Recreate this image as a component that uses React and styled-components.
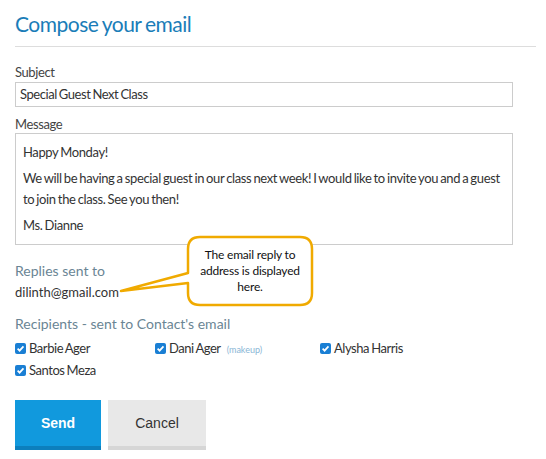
import React from 'react';
import styled, { createGlobalStyle } from 'styled-components';

const GlobalStyle = createGlobalStyle`
  body {
    margin: 0;
    background: #fff;
    font-family: Lato, "Open Sans", sans-serif;
    color: #333;
  }
`;

const Page = styled.div`
  position: relative;
  padding: 10px 10px 10px 15px;
`;

const Title = styled.h1`
  margin: 0;
  font-size: 21px;
  line-height: 28px;
  font-weight: 400;
  letter-spacing: -0.5px;
  word-spacing: -1px;
  color: #1a7db8;
`;

const Rule = styled.hr`
  margin: 8px 0 16px;
  border: 0;
  border-top: 1px solid #dddddd;
`;

const Label = styled.div`
  font-size: 13px;
  line-height: 18px;
  letter-spacing: -0.4px;
  color: #444;
  margin-top: ${(p) => p.$top || 0}px;
`;

const Field = styled.div`
  width: 498px;
  box-sizing: border-box;
  border: 1px solid #cccccc;
  margin-top: 1px;
  height: 25px;
  padding: 0 4px;
  font-size: 13px;
  line-height: 23px;
  letter-spacing: -0.45px;
  word-spacing: -0.8px;
  color: #333;
`;

const MessageBox = styled.div`
  width: 498px;
  height: 112px;
  box-sizing: border-box;
  border: 1px solid #cccccc;
  padding: 8px 7px;
  font-size: 13px;
  line-height: 21px;
  letter-spacing: -0.37px;
  word-spacing: -0.85px;
  color: #333;

  p {
    margin: 0 0 5px;
  }
`;

const Heading = styled.div`
  font-size: 14px;
  line-height: 20px;
  color: #6a8594;
  margin-top: ${(p) => p.$top || 0}px;
`;

const Email = styled.div`
  font-size: 13px;
  line-height: 18px;
  color: #333;
  margin-top: 2px;
`;

const Recipients = styled.div`
  display: grid;
  grid-template-columns: 140px 165px 1fr;
  margin-top: 3px;
`;

const Recipient = styled.label`
  display: flex;
  align-items: center;
  gap: 3px;
  font-size: 13px;
  line-height: 21px;
  letter-spacing: -0.45px;
  word-spacing: -0.8px;
  color: #333;
`;

const Box = styled.span`
  width: 11px;
  height: 11px;
  border-radius: 2px;
  background: #1a7fd4;
  display: inline-flex;
  align-items: center;
  justify-content: center;
`;

const Note = styled.span`
  font-size: 9px;
  letter-spacing: 0;
  color: #8ab6d6;
  margin-left: 3px;
  margin-top: 2px;
`;

const Buttons = styled.div`
  display: flex;
  gap: 7px;
  margin-top: 19px;
`;

const Button = styled.button`
  width: ${(p) => p.$w}px;
  height: 50px;
  border: 0;
  border-bottom: 4px solid ${(p) => (p.$primary ? '#0c7fbd' : '#d6d6d6')};
  background: ${(p) => (p.$primary ? '#1199dd' : '#e8e8e8')};
  color: ${(p) => (p.$primary ? '#fff' : '#333')};
  font-family: "Liberation Sans", Arial, sans-serif;
  font-size: 14px;
  font-weight: ${(p) => (p.$primary ? 700 : 400)};
  padding: 0;
`;

const Callout = styled.div`
  position: absolute;
  left: 118px;
  top: 234px;
  width: 198px;
  height: 74px;
`;

const CalloutText = styled.div`
  position: absolute;
  left: 72px;
  top: 13px;
  width: 120px;
  text-align: center;
  font-family: Lato, "Open Sans", sans-serif;
  font-size: 12px;
  line-height: 16px;
  letter-spacing: -0.2px;
  color: #111;
`;

const Check = () => (
  <svg width="9" height="9" viewBox="0 0 10 10">
    <path d="M1.8 5.2 L4 7.4 L8.3 2.6" fill="none" stroke="#fff" strokeWidth="1.9" />
  </svg>
);

const people = [
  { name: 'Barbie Ager' },
  { name: 'Dani Ager', note: '(makeup)' },
  { name: 'Alysha Harris' },
  { name: 'Santos Meza' },
];

export default function App() {
  return (
    <Page>
      <GlobalStyle />
      <Title>Compose your email</Title>
      <Rule />
      <Label>Subject</Label>
      <Field>Special Guest Next Class</Field>
      <Label $top={8}>Message</Label>
      <MessageBox>
        <p>Happy Monday!</p>
        <p>
          We will be having a special guest in our class next week! I would like to invite you and a guest
          to join the class. See you then!
        </p>
        <p>Ms. Dianne</p>
      </MessageBox>
      <Heading $top={16}>Replies sent to</Heading>
      <Email>dilinth@gmail.com</Email>
      <Heading $top={13}>Recipients - sent to Contact's email</Heading>
      <Recipients>
        {people.map((p) => (
          <Recipient key={p.name}>
            <Box>
              <Check />
            </Box>
            {p.name}
            {p.note && <Note>{p.note}</Note>}
          </Recipient>
        ))}
      </Recipients>
      <Buttons>
        <Button $primary $w={86}>Send</Button>
        <Button $w={98}>Cancel</Button>
      </Buttons>
      <Callout>
        <svg width="198" height="74" viewBox="0 0 198 74">
          <path
            d="M82 3 H182 Q194 3 194 15 V59 Q194 71 182 71 H82 Q70 71 70 59 V49 L3 57 L70 39 V15 Q70 3 82 3 Z"
            fill="#fff"
            stroke="#f0aa00"
            strokeWidth="2.5"
            strokeLinejoin="round"
          />
        </svg>
        <CalloutText>
          The email reply to
          <br />
          address is displayed
          <br />
          here.
        </CalloutText>
      </Callout>
    </Page>
  );
}
